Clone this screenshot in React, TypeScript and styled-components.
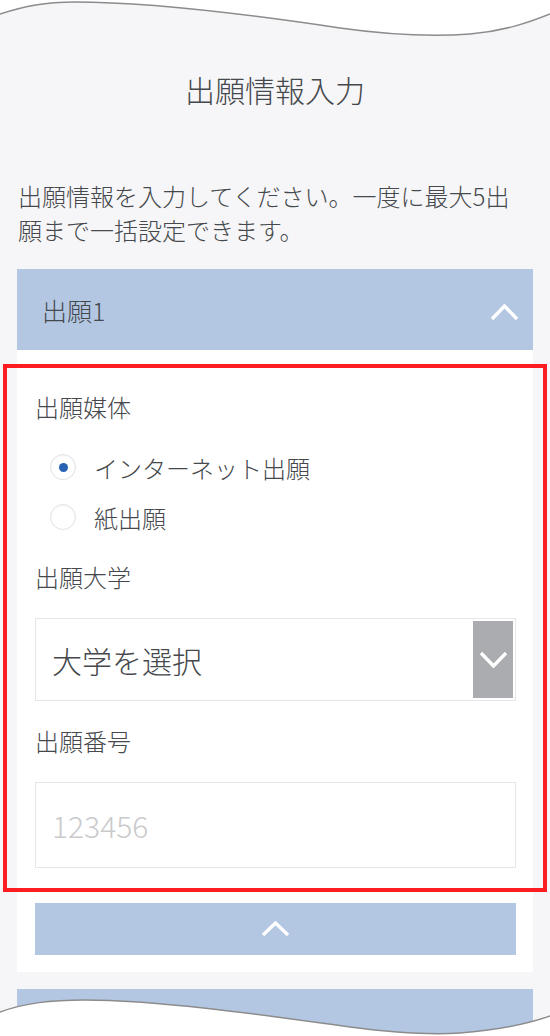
import React, { useState } from 'react'
import styled, { createGlobalStyle } from 'styled-components'

const GlobalStyle = createGlobalStyle`
  html, body {
    margin: 0;
    padding: 0;
    background: #f6f6f8;
  }
  body {
    font-family: 'Noto Sans CJK JP', 'Noto Sans', sans-serif;
    font-weight: 300;
    color: #474a4e;
  }
  * {
    box-sizing: border-box;
  }
`

const Page = styled.div`
  position: relative;
  width: 550px;
  height: 1036px;
  overflow: hidden;
  background: #f6f6f8;
  padding-top: 69px;
`

const Title = styled.h1`
  margin: 0;
  font-size: 30px;
  line-height: 40px;
  font-weight: 300;
  text-align: center;
  color: #45484c;
`

const Lead = styled.p`
  margin: 70px 0 0;
  padding: 0 24px 0 18px;
  font-size: 24px;
  line-height: 34px;
  color: #45484c;
`

const AccordionList = styled.div`
  margin: 22px 17px 0;
  display: flex;
  flex-direction: column;
  gap: 17px;
`

const AccordionItem = styled.section`
  display: flex;
  flex-direction: column;
`

const AccordionHeader = styled.button`
  display: flex;
  align-items: center;
  justify-content: space-between;
  width: 100%;
  height: 81px;
  padding: 0 14px 0 25px;
  border: none;
  background: #b3c7e3;
  font-family: inherit;
  font-weight: 300;
  font-size: 25px;
  color: #45484c;
  cursor: pointer;
  text-align: left;

  & > svg {
    margin-top: 6px;
  }
`

const AccordionBody = styled.div`
  background: #ffffff;
  padding: 39px 17px 17px 18px;
  display: flex;
  flex-direction: column;
`

const FieldLabel = styled.div<{ $gap: number }>`
  margin-top: ${(p) => p.$gap}px;
  font-size: 24px;
  line-height: 36px;
  color: #45484c;
`

const RadioGroup = styled.div`
  margin-top: 17px;
  display: flex;
  flex-direction: column;
  padding-left: 15px;
`

const RadioRow = styled.label`
  display: flex;
  align-items: center;
  gap: 18px;
  height: 50px;
  font-size: 24px;
  color: #45484c;
  cursor: pointer;
`

const RadioCircle = styled.span<{ $checked: boolean }>`
  display: flex;
  align-items: center;
  justify-content: center;
  width: 26px;
  height: 26px;
  border-radius: 50%;
  border: 1.5px solid #e2e2e4;
  background: #fff;
  box-shadow: inset 0 1px 2px rgba(0, 0, 0, 0.04);

  &::after {
    content: '';
    width: 9px;
    height: 9px;
    border-radius: 50%;
    background: ${(p) => (p.$checked ? '#2a62b3' : 'transparent')};
  }
`

const SelectBox = styled.div`
  margin-top: 23px;
  height: 83px;
  display: flex;
  align-items: stretch;
  border: 1.5px solid #e6e6e8;
  background: #fff;
  padding: 2px;
`

const SelectText = styled.div`
  flex: 1;
  display: flex;
  align-items: center;
  padding-left: 14px;
  font-size: 30px;
  color: #45484c;
`

const SelectButton = styled.div`
  width: 40px;
  display: flex;
  align-items: center;
  justify-content: center;
  background: #abacb0;
`

const TextInput = styled.input`
  margin-top: 23px;
  height: 86px;
  width: 100%;
  border: 1.5px solid #e6e6e8;
  padding: 0 16px;
  font-family: inherit;
  font-weight: 300;
  font-size: 30px;
  color: #45484c;
  outline: none;

  &::placeholder {
    color: #cacacc;
  }
`

const CollapseBar = styled.button`
  margin-top: 35px;
  height: 52px;
  width: 100%;
  display: flex;
  align-items: center;
  justify-content: center;
  border: none;
  background: #b3c7e3;
  cursor: pointer;
`

const Annotation = styled.div`
  position: absolute;
  left: 3px;
  top: 364px;
  width: 544px;
  height: 528px;
  border: 4px solid #fb1d22;
  pointer-events: none;
`

const TornEdge = styled.svg<{ $bottom?: boolean }>`
  position: absolute;
  left: 0;
  ${(p) => (p.$bottom ? 'bottom: 0;' : 'top: 0;')}
  width: 550px;
  height: 40px;
  pointer-events: none;
`

const Chevron = ({ dir, w = 25, h = 13 }: { dir: 'up' | 'down'; w?: number; h?: number }) => (
  <svg width={w + 4} height={h + 4} viewBox={`-2 -2 ${w + 4} ${h + 4}`}>
    <polyline
      points={dir === 'up' ? `0,${h} ${w / 2},0 ${w},${h}` : `0,0 ${w / 2},${h} ${w},0`}
      fill="none"
      stroke="#ffffff"
      strokeWidth={3.4}
      strokeLinejoin="miter"
    />
  </svg>
)

export default function App() {
  const [media, setMedia] = useState<'net' | 'paper'>('net')

  return (
    <Page>
      <GlobalStyle />
      <Title>出願情報入力</Title>
      <Lead>出願情報を入力してください。一度に最大5出願まで一括設定できます。</Lead>

      <AccordionList>
        <AccordionItem>
          <AccordionHeader type="button">
            <span>出願1</span>
            <Chevron dir="up" />
          </AccordionHeader>
          <AccordionBody>
            <FieldLabel $gap={0}>出願媒体</FieldLabel>
            <RadioGroup>
              <RadioRow onClick={() => setMedia('net')}>
                <RadioCircle $checked={media === 'net'} />
                インターネット出願
              </RadioRow>
              <RadioRow onClick={() => setMedia('paper')}>
                <RadioCircle $checked={media === 'paper'} />
                紙出願
              </RadioRow>
            </RadioGroup>

            <FieldLabel $gap={17}>出願大学</FieldLabel>
            <SelectBox>
              <SelectText>大学を選択</SelectText>
              <SelectButton>
                <Chevron dir="down" />
              </SelectButton>
            </SelectBox>

            <FieldLabel $gap={22}>出願番号</FieldLabel>
            <TextInput placeholder="123456" />

            <CollapseBar type="button">
              <Chevron dir="up" w={25} h={12} />
            </CollapseBar>
          </AccordionBody>
        </AccordionItem>

        {/* next item: only the top of its header shows above the torn edge */}
        <AccordionItem>
          <AccordionHeader type="button" aria-label="出願2" />
        </AccordionItem>
      </AccordionList>

      <Annotation />

      <TornEdge viewBox="0 0 550 40">
        <path d="M0,14 C25,6 45,2 75,2 C150,2 260,16 340,28 C390,35 430,37 470,34 C505,31 530,22 550,14 L550,0 L0,0 Z" fill="#ffffff" />
        <path d="M0,14 C25,6 45,2 75,2 C150,2 260,16 340,28 C390,35 430,37 470,34 C505,31 530,22 550,14" fill="none" stroke="#8c8c8c" strokeWidth={1.5} />
      </TornEdge>

      <TornEdge $bottom viewBox="0 0 550 40">
        <path d="M0,16 C25,7 50,4 85,4 C160,4 270,20 350,31 C395,37 430,39 460,37 C500,34 530,27 550,20 L550,40 L0,40 Z" fill="#ffffff" />
        <path d="M0,16 C25,7 50,4 85,4 C160,4 270,20 350,31 C395,37 430,39 460,37 C500,34 530,27 550,20" fill="none" stroke="#8c8c8c" strokeWidth={1.5} />
      </TornEdge>
    </Page>
  )
}
